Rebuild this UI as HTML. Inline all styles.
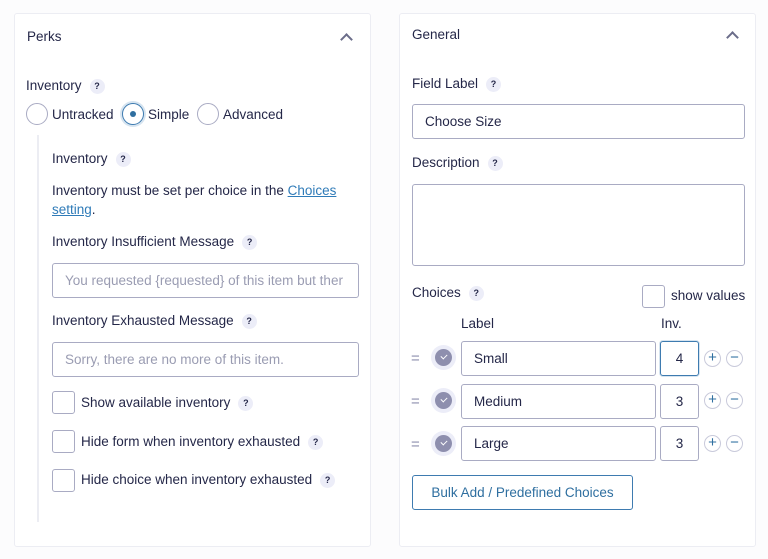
<!DOCTYPE html>
<html><head><style>
*{box-sizing:border-box;margin:0;padding:0}
body{width:768px;height:559px;background:#fcfcfd;font-family:"Liberation Sans",sans-serif;font-size:13.5px;color:#242748;position:relative;overflow:hidden}
.p{position:absolute;background:#fff;border:1px solid #ecedf3;border-radius:3px}
.a{position:absolute;white-space:nowrap}
.q{display:inline-block;width:15px;height:15px;border-radius:50%;background:#ecedf8;font-size:9px;font-weight:bold;text-align:center;line-height:15px;color:#242748;margin-left:8px;vertical-align:1px}
.in{position:absolute;border:1px solid #a9abc3;border-radius:3px;background:#fff;height:35px;line-height:33px;padding-left:12px;font-size:13.5px}
.cb{position:absolute;width:23px;height:23px;border:1px solid #a9abc3;border-radius:3px;background:#fff}
.r{position:absolute;width:22px;height:22px;border:1px solid #a9abc3;border-radius:50%;background:#fff}
.chev{position:absolute;width:9px;height:9px;border-left:2px solid #6b6d8a;border-top:2px solid #6b6d8a;transform:rotate(45deg)}
.pm{position:absolute;width:17px;height:17px;border:1px solid #c9cadb;border-radius:50%;text-align:center;line-height:14px;font-size:15px;color:#2f6fa0}
.ck{position:absolute;width:25px;height:25px;border-radius:50%;background:#ecedf8}
.ck:after{content:"";position:absolute;left:4px;top:4px;width:17px;height:17px;border-radius:50%;background:#8e8fae}
.ck:before{content:"";position:absolute;left:10px;top:9px;width:5px;height:3px;border-left:1.5px solid #fff;border-bottom:1.5px solid #fff;transform:rotate(-45deg);z-index:2}
</style></head><body>
<div class="p" style="left:14px;top:13px;width:357px;height:534px"></div>
<div class="p" style="left:399px;top:13px;width:357px;height:534px"></div>

<div class="a" style="left:27px;top:29px">Perks</div>
<div class="chev" style="left:342px;top:35px"></div>
<div class="a" style="left:26px;top:78px">Inventory<span class="q">?</span></div>
<div class="r" style="left:26px;top:103px"></div><div class="a" style="left:52px;top:107px">Untracked</div>
<div class="r" style="left:122px;top:103px;border-color:#3e7bb0;box-shadow:0 0 0 2px #d6e4f0"></div><div style="position:absolute;left:130px;top:111px;width:6px;height:6px;border-radius:50%;background:#2f6fa0"></div>
<div class="a" style="left:148px;top:107px">Simple</div>
<div class="r" style="left:197px;top:103px"></div><div class="a" style="left:223px;top:107px">Advanced</div>
<div style="position:absolute;left:37px;top:135px;width:2px;height:387px;background:#ecedf3"></div>
<div class="a" style="left:52px;top:151px">Inventory<span class="q">?</span></div>
<div class="a" style="left:52px;top:181px;line-height:19px">Inventory must be set per choice in the <span style="color:#2f7bb8;text-decoration:underline">Choices</span><br><span style="color:#2f7bb8;text-decoration:underline">setting</span>.</div>
<div class="a" style="left:52px;top:234px">Inventory Insufficient Message<span class="q">?</span></div>
<div class="in" style="left:52px;top:263px;width:307px;color:#9a9cb2;overflow:hidden">You requested {requested} of this item but ther</div>
<div class="a" style="left:52px;top:313px">Inventory Exhausted Message<span class="q">?</span></div>
<div class="in" style="left:52px;top:342px;width:307px;color:#9a9cb2">Sorry, there are no more of this item.</div>
<div class="cb" style="left:52px;top:391px"></div><div class="a" style="left:81px;top:395px">Show available inventory<span class="q">?</span></div>
<div class="cb" style="left:52px;top:430px"></div><div class="a" style="left:81px;top:434px">Hide form when inventory exhausted<span class="q">?</span></div>
<div class="cb" style="left:52px;top:469px"></div><div class="a" style="left:81px;top:472px">Hide choice when inventory exhausted<span class="q">?</span></div>

<div class="a" style="left:412px;top:27px">General</div>
<div class="chev" style="left:728px;top:33px"></div>
<div class="a" style="left:412px;top:76px">Field Label<span class="q">?</span></div>
<div class="in" style="left:412px;top:104px;width:333px">Choose Size</div>
<div class="a" style="left:412px;top:155px">Description<span class="q">?</span></div>
<div class="in" style="left:412px;top:184px;width:333px;height:82px"></div>
<div class="a" style="left:412px;top:285px">Choices<span class="q">?</span></div>
<div class="cb" style="left:642px;top:285px"></div><div class="a" style="left:671px;top:288px">show values</div>
<div class="a" style="left:461px;top:316px">Label</div>
<div class="a" style="left:661px;top:316px">Inv.</div>

<div class="a" style="left:411px;top:350px;color:#8e8fae;font-size:15px">=</div><div class="ck" style="left:431px;top:345px"></div>
<div class="in" style="left:461px;top:341px;width:195px;height:35px">Small</div>
<div class="in" style="left:660px;top:341px;width:39px;height:35px;padding:0;text-align:center;border-color:#3e7bb0;box-shadow:0 0 0 1px #d6e4f0">4</div>
<div class="pm" style="left:704px;top:350px">+</div><div class="pm" style="left:726px;top:350px">−</div>

<div class="a" style="left:411px;top:393px;color:#8e8fae;font-size:15px">=</div><div class="ck" style="left:431px;top:388px"></div>
<div class="in" style="left:461px;top:384px;width:195px;height:35px">Medium</div>
<div class="in" style="left:660px;top:384px;width:39px;height:35px;padding:0;text-align:center">3</div>
<div class="pm" style="left:704px;top:392px">+</div><div class="pm" style="left:726px;top:392px">−</div>

<div class="a" style="left:411px;top:436px;color:#8e8fae;font-size:15px">=</div><div class="ck" style="left:431px;top:431px"></div>
<div class="in" style="left:461px;top:426px;width:195px;height:35px">Large</div>
<div class="in" style="left:660px;top:426px;width:39px;height:35px;padding:0;text-align:center">3</div>
<div class="pm" style="left:704px;top:435px">+</div><div class="pm" style="left:726px;top:435px">−</div>

<div style="position:absolute;left:412px;top:475px;width:221px;height:35px;border:1px solid #3e7bb0;border-radius:3px;color:#2f6fa0;text-align:center;line-height:33px">Bulk Add / Predefined Choices</div>
</body></html>
